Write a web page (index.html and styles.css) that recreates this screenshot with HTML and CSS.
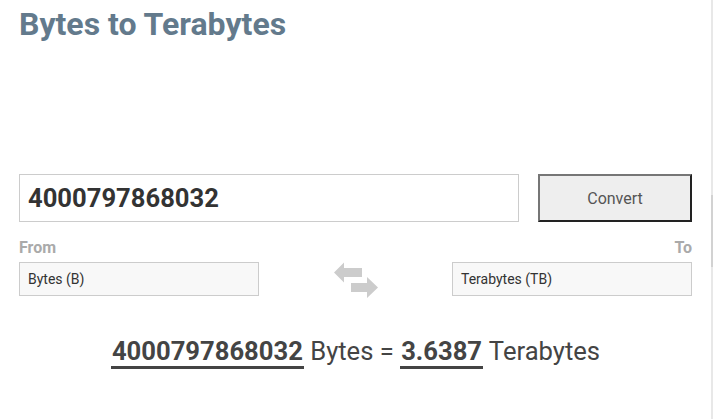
FILE: index.html
```html
<!DOCTYPE html>
<html lang="en">
<head>
<meta charset="utf-8">
<title>Bytes to Terabytes</title>
<link rel="stylesheet" href="styles.css">
</head>
<body>
<div class="page">
  <h1 class="title">Bytes to Terabytes</h1>
  <div class="form">
    <div class="input-row">
      <div class="value-box">4000797868032</div>
      <button class="convert" type="button">Convert</button>
    </div>
    <div class="units-row">
      <div class="unit-col">
        <div class="label">From</div>
        <div class="select">Bytes (B)</div>
      </div>
      <div class="swap">
        <svg width="44" height="36" viewBox="0 0 44 36" aria-hidden="true">
          <polygon points="0,10.5 10,0.5 10,6 28,6 28,15 10,15 10,20.5" fill="#cccccc"/>
          <polygon points="44,25.5 33,15 33,21 17,21 17,30 33,30 33,36" fill="#cccccc"/>
        </svg>
      </div>
      <div class="unit-col right">
        <div class="label">To</div>
        <div class="select">Terabytes (TB)</div>
      </div>
    </div>
  </div>
  <p class="result"><span class="num">4000797868032</span> Bytes = <span class="num">3.6387</span> Terabytes</p>
</div>
<div class="scrollbar"><div class="thumb"></div></div>
</body>
</html>
```

FILE: styles.css
```css
html, body {
  margin: 0;
  padding: 0;
  background: #ffffff;
}
body {
  font-family: Roboto, "Liberation Sans", Arial, sans-serif;
  color: #444444;
  position: relative;
  min-height: 419px;
}
.page {
  padding: 6px 21px 0 19px;
}
.title {
  margin: 0;
  font-size: 32px;
  line-height: 36px;
  font-weight: 700;
  color: #637a8c;
}
.form {
  margin-top: 132px;
}
.input-row {
  display: flex;
  gap: 19px;
  height: 48px;
}
.value-box {
  flex: 1;
  box-sizing: border-box;
  border: 1px solid #cccccc;
  padding: 0 8px;
  font-size: 25.6px;
  font-weight: 700;
  color: #333333;
  display: flex;
  align-items: center;
}
.convert {
  width: 154px;
  box-sizing: border-box;
  margin: 0;
  border: 2px solid;
  border-color: #767676 #222222 #222222 #767676;
  background: #eeeeee;
  font-family: Roboto, "Liberation Sans", Arial, sans-serif;
  font-size: 16px;
  color: #555555;
  padding: 0;
}
.units-row {
  display: flex;
  justify-content: space-between;
  align-items: flex-end;
  margin-top: 17px;
}
.unit-col {
  width: 240px;
  display: flex;
  flex-direction: column;
}
.unit-col.right {
  align-items: flex-end;
}
.label {
  font-size: 16px;
  line-height: 18px;
  font-weight: 700;
  color: #aaaaaa;
  margin-bottom: 5px;
}
.select {
  width: 100%;
  box-sizing: border-box;
  height: 34px;
  border: 1px solid #cccccc;
  background: #f8f8f8;
  padding: 0 8px;
  font-size: 14px;
  color: #333333;
  display: flex;
  align-items: center;
}
.swap {
  margin-bottom: -2px;
}
.swap svg {
  display: block;
}
.result {
  margin: 37px 0 0;
  text-align: center;
  font-size: 25.6px;
  line-height: 36px;
  color: #444444;
}
.result .num {
  font-weight: 700;
  border-bottom: 3px solid #444444;
  padding: 0 1px;
}
.scrollbar {
  position: absolute;
  top: 0;
  right: 0;
  width: 2px;
  height: 419px;
  background: #e8e8e8;
}
.scrollbar .thumb {
  margin-top: 195px;
  height: 72px;
  background: #d2d2d2;
}
```
